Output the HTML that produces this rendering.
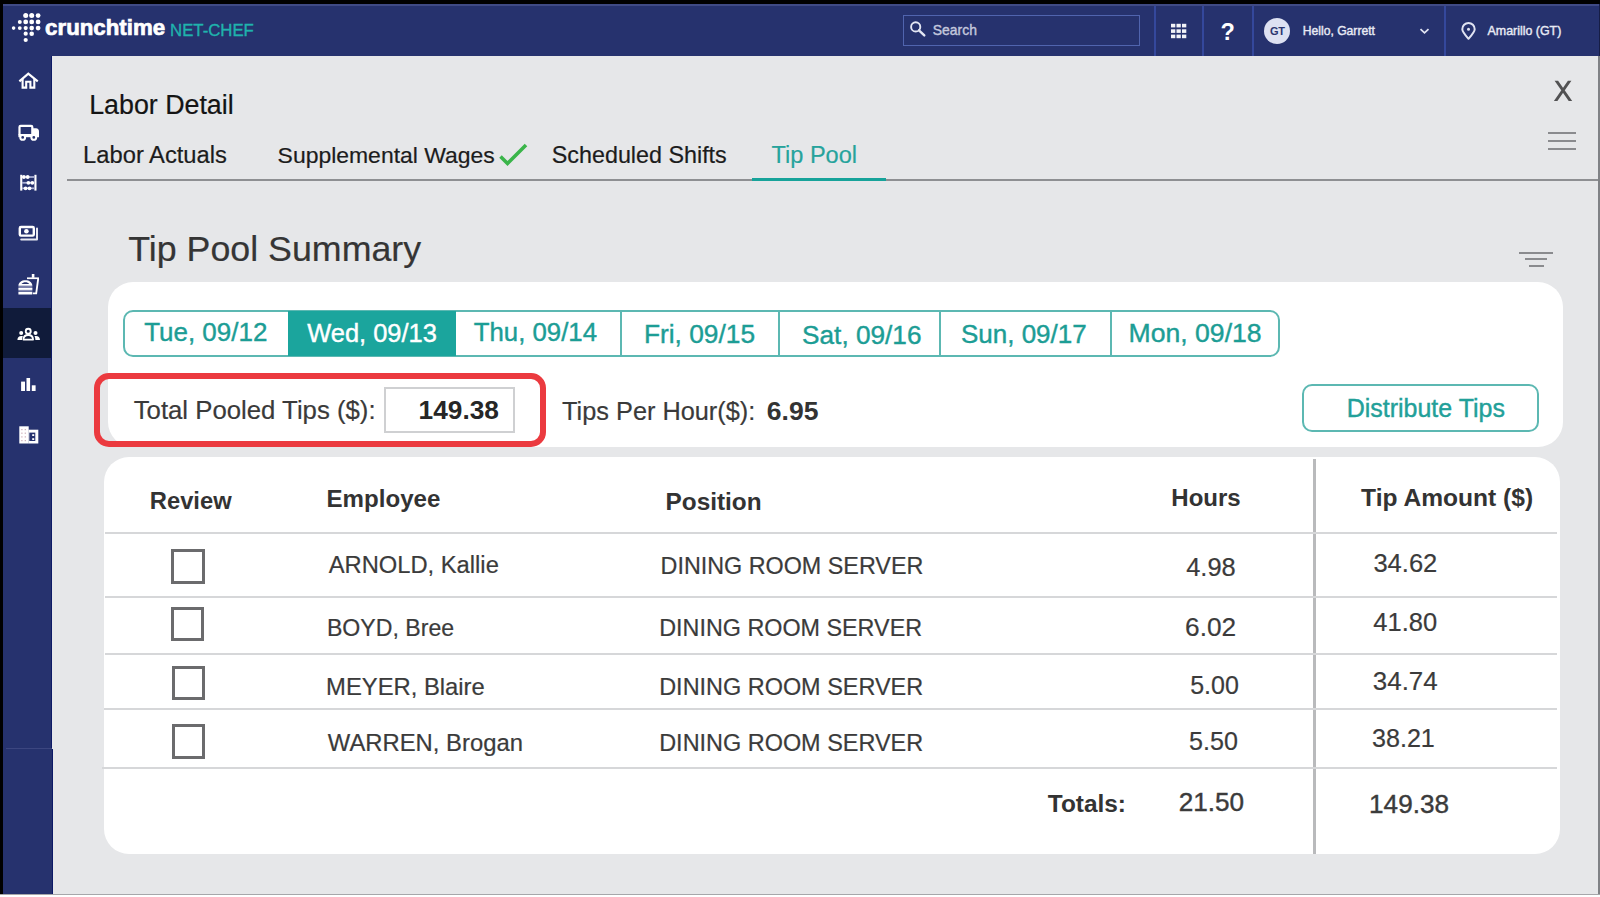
<!DOCTYPE html>
<html><head><meta charset="utf-8">
<style>
html,body{margin:0;padding:0;}
body{width:1600px;height:897px;position:relative;overflow:hidden;background:#ffffff;font-family:"Liberation Sans",sans-serif;}
.a{position:absolute;box-sizing:border-box;}
.t{position:absolute;white-space:nowrap;line-height:1;font-family:"Liberation Sans",sans-serif;}
</style></head><body>
<!-- frame -->
<div class="a" style="left:0;top:0;width:1600px;height:4px;background:#000"></div>
<div class="a" style="left:0;top:0;width:3px;height:894px;background:#000"></div>
<!-- header -->
<div class="a" style="left:3px;top:4px;width:1597px;height:52px;background:#26326e"></div>
<div class="a" style="left:3px;top:4px;width:1597px;height:2px;background:#3f4a85"></div>
<div class="a" style="left:1599px;top:4px;width:1px;height:52px;background:#161d45"></div>
<!-- sidebar -->
<div class="a" style="left:3px;top:56px;width:50px;height:838px;background:#26326e"></div>
<div class="a" style="left:51px;top:56px;width:1px;height:693px;background:#0d1a66"></div>
<div class="a" style="left:52px;top:749px;width:1px;height:145px;background:#0d1a66"></div>
<div class="a" style="left:3px;top:308px;width:48px;height:50px;background:#101b3a"></div>
<div class="a" style="left:6px;top:748px;width:46px;height:1px;background:#3c4680"></div>
<!-- content -->
<div class="a" style="left:52px;top:56px;width:1546px;height:693px;background:#e6e7e9"></div>
<div class="a" style="left:53px;top:749px;width:1545px;height:145px;background:#e6e7e9"></div>
<div class="a" style="left:1598px;top:56px;width:2px;height:838px;background:#808286"></div>
<div class="a" style="left:0;top:894px;width:1600px;height:1px;background:#a6a7aa"></div>

<!-- search box -->
<div class="a" style="left:903px;top:15px;width:237px;height:31px;border:1px solid #5064ae"></div>
<svg class="a" style="left:908px;top:21px" width="18" height="17" viewBox="0 0 18 17">
  <circle cx="7.7" cy="5.9" r="4.6" fill="none" stroke="#e3e6f3" stroke-width="1.9"/>
  <line x1="11" y1="9.3" x2="16.3" y2="14.4" stroke="#e3e6f3" stroke-width="2.4" stroke-linecap="round"/>
</svg>
<!-- separators -->
<div class="a" style="left:1154px;top:6px;width:2px;height:50px;background:#34489c"></div>
<div class="a" style="left:1202px;top:6px;width:2px;height:50px;background:#34489c"></div>
<div class="a" style="left:1252px;top:6px;width:2px;height:50px;background:#34489c"></div>
<div class="a" style="left:1444px;top:6px;width:2px;height:50px;background:#34489c"></div>
<!-- grid icon -->
<svg class="a" style="left:1171px;top:23px" width="16" height="16" viewBox="0 0 16 16" fill="#f2f3f8">
  <rect x="0" y="0.8" width="4.3" height="3.6"/><rect x="5.5" y="0.8" width="4.3" height="3.6"/><rect x="11" y="0.8" width="4.3" height="3.6"/>
  <rect x="0" y="6.3" width="4.3" height="3.6"/><rect x="5.5" y="6.3" width="4.3" height="3.6"/><rect x="11" y="6.3" width="4.3" height="3.6"/>
  <rect x="0" y="11.6" width="4.3" height="3.6"/><rect x="5.5" y="11.6" width="4.3" height="3.6"/><rect x="11" y="11.6" width="4.3" height="3.6"/>
</svg>
<!-- help -->
<div class="t" style="left:1220.5px;top:20.5px;font-size:23.5px;font-weight:700;color:#fff">?</div>
<!-- avatar -->
<div class="a" style="left:1264px;top:18px;width:26px;height:26px;border-radius:50%;background:#dde1f2"></div>
<div class="t" style="left:1270px;top:25.5px;font-size:11px;font-weight:700;color:#2c3670;letter-spacing:-0.3px">GT</div>
<!-- chevron -->
<svg class="a" style="left:1419px;top:27px" width="11" height="8" viewBox="0 0 11 8">
  <polyline points="1.5,2.2 5.5,5.8 9.5,2.2" fill="none" stroke="#e0e3f2" stroke-width="1.8"/>
</svg>
<!-- pin -->
<svg class="a" style="left:1460px;top:22px" width="17" height="19" viewBox="0 0 17 19">
  <path d="M8.5 16.8 C4.6 12.4 2.3 9.6 2.3 7.2 A6.2 6.2 0 0 1 14.7 7.2 C14.7 9.6 12.4 12.4 8.5 16.8 Z" fill="none" stroke="#e0e3f2" stroke-width="2" stroke-linejoin="round"/>
  <circle cx="8.5" cy="7.2" r="1.5" fill="#e0e3f2"/>
</svg>
<!-- logo dots -->
<svg class="a" style="left:10px;top:10px" width="34" height="34" viewBox="10 10 34 34" fill="#fff">
  <circle cx="25.7" cy="15.6" r="2.5"/><circle cx="31.7" cy="15.6" r="2.5"/><circle cx="38.1" cy="15.6" r="2.4"/>
  <circle cx="19.8" cy="21.9" r="2"/><circle cx="25.7" cy="21.9" r="2.4"/><circle cx="31.7" cy="21.9" r="2.4"/><circle cx="38.1" cy="21.9" r="2.4"/>
  <circle cx="13.6" cy="28.1" r="1.8"/><circle cx="19.8" cy="28.1" r="1.9"/><circle cx="25.7" cy="28.1" r="2.1"/><circle cx="31.7" cy="28.1" r="2.3"/><circle cx="38.1" cy="28.1" r="2.4"/>
  <circle cx="25.7" cy="33.7" r="2.1"/><circle cx="31.7" cy="33.7" r="2.3"/>
  <circle cx="25.7" cy="40" r="2.1"/>
</svg>

<!-- sidebar icons -->
<svg class="a" style="left:0;top:56px" width="53" height="400" viewBox="0 56 53 400">
<!-- home -->
<g fill="none" stroke="#fff">
  <path d="M20.2 80.6 L28.3 73.6 L36.9 80.6" stroke-width="2.2" stroke-linejoin="miter" stroke-linecap="square"/>
  <path d="M22.6 79 V87.6 H26.2 V81.8 H30.4 V87.6 H34.3 V79" stroke-width="2.1"/>
</g>
<!-- truck -->
<g>
  <rect x="19.5" y="125.8" width="12.8" height="9.5" rx="1.2" fill="none" stroke="#fff" stroke-width="2.2"/>
  <path d="M32 128.2 H36 Q39 128.6 39 131.6 V137.2 H32 Z" fill="#fff"/>
  <rect x="18.4" y="134" width="14" height="3.2" fill="#fff"/>
  <circle cx="22.7" cy="137.4" r="2.4" fill="#26326e" stroke="#fff" stroke-width="2"/>
  <circle cx="33.8" cy="137.4" r="2.4" fill="#26326e" stroke="#fff" stroke-width="2"/>
</g>
<!-- abacus -->
<g fill="#fff">
  <rect x="20.2" y="174.8" width="2.1" height="15.8"/><rect x="34.4" y="174.8" width="2.1" height="15.8"/>
  <rect x="22" y="176.1" width="12.5" height="1.8" fill="#a9aed3"/>
  <rect x="22" y="181.9" width="12.5" height="1.8" fill="#a9aed3"/>
  <rect x="22" y="187.4" width="12.5" height="1.8" fill="#a9aed3"/>
  <circle cx="23.9" cy="177" r="1.9"/><circle cx="27.7" cy="177" r="1.9"/>
  <circle cx="28.4" cy="182.8" r="1.9"/><circle cx="32.3" cy="182.8" r="1.9"/>
  <circle cx="25.6" cy="188.3" r="1.9"/><circle cx="29.5" cy="188.3" r="1.9"/>
</g>
<!-- money -->
<g>
  <rect x="19.8" y="227" width="14" height="8.6" rx="1.2" fill="none" stroke="#fff" stroke-width="2.4"/>
  <circle cx="26.4" cy="231.3" r="2.3" fill="#fff"/>
  <path d="M37 228.4 V239.6 H21.2" fill="none" stroke="#e8e9f2" stroke-width="2" stroke-linecap="round" stroke-linejoin="round"/>
</g>
<!-- burger & drink -->
<g fill="#fff">
  <path d="M18.4 285.8 C18.6 282.2 21.6 280.2 25.4 280.2 C29.2 280.2 32.2 282.2 32.4 285.8 Z M21.5 284 C22.5 282.7 23.8 282.2 25.4 282.2 C27 282.2 28.3 282.7 29.3 284 Z" fill-rule="evenodd"/>
  <rect x="18.4" y="286.2" width="14" height="1.6" fill="#8f94bb"/>
  <rect x="18.4" y="288" width="14" height="1.9"/>
  <rect x="18.4" y="290.1" width="14" height="1.5" fill="#8f94bb"/>
  <rect x="18.4" y="292" width="14" height="2.4" rx="0.5"/>
  <rect x="27" y="277.4" width="12" height="1.7"/>
  <rect x="31.8" y="274" width="2.6" height="3.8"/>
  <path d="M37.2 279 H39.1 L37 294.3 H33 V292.6 H35.4 Z"/>
</g>
<!-- people -->
<g>
  <circle cx="28.25" cy="331.3" r="2.5" fill="none" stroke="#fff" stroke-width="1.9"/>
  <path d="M23.4 339.6 C23.6 336.6 25.6 335 28.25 335 C30.9 335 32.9 336.6 33.1 339.6 Z" fill="none" stroke="#fff" stroke-width="1.8" stroke-linejoin="round"/>
  <circle cx="21.2" cy="333" r="2" fill="#fff"/><circle cx="35.5" cy="333" r="2" fill="#fff"/>
  <path d="M17.4 340 C17.5 337.4 19 335.9 21.3 335.9 C21.9 335.9 22.4 336 22.9 336.2 C22.3 337.3 22 338.6 22 340 Z" fill="#fff"/>
  <path d="M40 340 C39.9 337.4 38.4 335.9 36.1 335.9 C35.5 335.9 35 336 34.5 336.2 C35.1 337.3 35.4 338.6 35.4 340 Z" fill="#fff"/>
</g>
<!-- chart -->
<g fill="#fff">
  <rect x="21.1" y="381.6" width="3.9" height="9.4"/><rect x="26.5" y="378" width="3.6" height="13"/><rect x="31.8" y="385.3" width="3.8" height="5.7"/>
</g>
<!-- building -->
<g>
  <rect x="19.3" y="426.3" width="9.4" height="17.2" fill="#fff"/>
  <rect x="28.6" y="429.7" width="9.7" height="13.8" fill="#fff"/>
  <rect x="29.3" y="432.6" width="6" height="8.4" fill="#26326e"/>
  <rect x="32.2" y="434.2" width="2" height="1.8" fill="#fff"/><rect x="32.2" y="438.2" width="2" height="1.8" fill="#fff"/>
  <g fill="#c9a9b5">
    <rect x="21.3" y="429" width="1.2" height="1.2"/><rect x="24.7" y="429" width="1.2" height="1.2"/>
    <rect x="21.3" y="432.6" width="1.2" height="1.2"/><rect x="24.7" y="432.6" width="1.2" height="1.2"/>
    <rect x="21.3" y="436.3" width="1.2" height="1.2"/><rect x="24.7" y="436.3" width="1.2" height="1.2"/>
    <rect x="21.3" y="440" width="1.2" height="1.2"/><rect x="24.7" y="440" width="1.2" height="1.2"/>
  </g>
</g>
</svg>

<!-- content top -->
<svg class="a" style="left:1550px;top:78px" width="26" height="27" viewBox="1550 78 26 27">
  <path d="M1554.6 80.8 H1558.1 L1572.2 100.9 H1568.7 Z M1567.9 80.8 H1571.4 L1557.4 100.9 H1553.9 Z" fill="#525253"/>
</svg>
<div class="a" style="left:1548px;top:132px;width:28px;height:2px;background:#8a8b8e"></div>
<div class="a" style="left:1548px;top:140px;width:28px;height:2px;background:#8a8b8e"></div>
<div class="a" style="left:1548px;top:148px;width:28px;height:2px;background:#8a8b8e"></div>
<!-- tab line -->
<div class="a" style="left:67px;top:179px;width:1531px;height:2px;background:#8e8f92"></div>
<div class="a" style="left:752px;top:178px;width:134px;height:3px;background:#17a39a"></div>
<!-- check -->
<svg class="a" style="left:498px;top:142px" width="31" height="25" viewBox="0 0 31 25">
  <polyline points="2.5,14.5 9.5,21.5 28,3" fill="none" stroke="#3ab54a" stroke-width="3.6"/>
</svg>
<!-- filter icon -->
<div class="a" style="left:1519px;top:252px;width:34px;height:2px;background:#8a8b8e"></div>
<div class="a" style="left:1525px;top:258px;width:22px;height:2px;background:#8a8b8e"></div>
<div class="a" style="left:1529px;top:265px;width:15px;height:2px;background:#8a8b8e"></div>

<!-- card 1 -->
<div class="a" style="left:108px;top:282px;width:1455px;height:165px;background:#fff;border-radius:25px"></div>
<!-- segmented -->
<div class="a" style="left:123px;top:310px;width:1157px;height:47px;border:2px solid #5cb8b2;border-radius:10px"></div>
<div class="a" style="left:288px;top:311px;width:168px;height:45px;background:#1ba59d"></div>
<div class="a" style="left:620px;top:311px;width:2px;height:45px;background:#5cb8b2"></div>
<div class="a" style="left:778px;top:311px;width:2px;height:45px;background:#5cb8b2"></div>
<div class="a" style="left:939px;top:311px;width:2px;height:45px;background:#5cb8b2"></div>
<div class="a" style="left:1110px;top:311px;width:2px;height:45px;background:#5cb8b2"></div>
<!-- red box -->
<div class="a" style="left:94px;top:373px;width:452px;height:74px;border:6px solid #eb3a3f;border-radius:15px"></div>
<!-- input -->
<div class="a" style="left:384px;top:387px;width:131px;height:46px;border:2px solid #cfd0d2"></div>
<!-- distribute -->
<div class="a" style="left:1302px;top:384px;width:237px;height:48px;border:2px solid #5cb8b2;border-radius:10px"></div>

<!-- card 2 -->
<div class="a" style="left:104px;top:457px;width:1456px;height:397px;background:#fff;border-radius:25px"></div>
<div class="a" style="left:1313px;top:459px;width:3px;height:395px;background:#b9babc"></div>
<div class="a" style="left:105px;top:532px;width:1452px;height:2px;background:#d6d7d9"></div>
<div class="a" style="left:105px;top:596px;width:1452px;height:2px;background:#d6d7d9"></div>
<div class="a" style="left:105px;top:653px;width:1452px;height:2px;background:#d6d7d9"></div>
<div class="a" style="left:104px;top:708px;width:1453px;height:2px;background:#d6d7d9"></div>
<div class="a" style="left:102px;top:767px;width:1455px;height:2px;background:#d6d7d9"></div>
<!-- checkboxes -->
<div class="a" style="left:171px;top:549px;width:34px;height:35px;border:3.5px solid #6b6b6d"></div>
<div class="a" style="left:171px;top:607px;width:33px;height:34px;border:3.5px solid #6b6b6d"></div>
<div class="a" style="left:172px;top:666px;width:33px;height:34px;border:3.5px solid #6b6b6d"></div>
<div class="a" style="left:172px;top:724px;width:33px;height:35px;border:3.5px solid #6b6b6d"></div>

<div class="t" style="left:45.1px;top:17.3px;font-size:22.27px;font-weight:700;color:#ffffff;-webkit-text-stroke:0.7px #ffffff;">crunchtime</div>
<div class="t" style="left:170.1px;top:23.1px;font-size:16.76px;font-weight:400;color:#1fb3ad;-webkit-text-stroke:0.35px #1fb3ad;">NET-CHEF</div>
<div class="t" style="left:932.8px;top:23.6px;font-size:13.93px;font-weight:400;color:#c3c7dc;-webkit-text-stroke:0.4px #c3c7dc;">Search</div>
<div class="t" style="left:1302.7px;top:25.3px;font-size:12.17px;font-weight:400;color:#e8eaf4;-webkit-text-stroke:0.4px #e8eaf4;">Hello, Garrett</div>
<div class="t" style="left:1487.5px;top:25.2px;font-size:12.43px;font-weight:400;color:#e8eaf4;-webkit-text-stroke:0.4px #e8eaf4;">Amarillo (GT)</div>
<div class="t" style="left:89.2px;top:91.8px;font-size:26.8px;font-weight:400;color:#141414;-webkit-text-stroke:0.2px #141414;">Labor Detail</div>
<div class="t" style="left:83.1px;top:143.6px;font-size:23.74px;font-weight:400;color:#1c1c1c;-webkit-text-stroke:0.2px #1c1c1c;">Labor Actuals</div>
<div class="t" style="left:277.6px;top:144.3px;font-size:22.95px;font-weight:400;color:#1c1c1c;-webkit-text-stroke:0.2px #1c1c1c;">Supplemental Wages</div>
<div class="t" style="left:551.8px;top:144.0px;font-size:23.32px;font-weight:400;color:#1c1c1c;-webkit-text-stroke:0.2px #1c1c1c;">Scheduled Shifts</div>
<div class="t" style="left:771.5px;top:143.8px;font-size:23.55px;font-weight:400;color:#26a39c;-webkit-text-stroke:0.2px #26a39c;">Tip Pool</div>
<div class="t" style="left:128.3px;top:232.1px;font-size:35.78px;font-weight:400;color:#353535;-webkit-text-stroke:0.2px #353535;">Tip Pool Summary</div>
<div class="t" style="left:144.2px;top:320.0px;font-size:25.96px;font-weight:400;color:#1c9d95;-webkit-text-stroke:0.4px #1c9d95;">Tue, 09/12</div>
<div class="t" style="left:307.2px;top:320.7px;font-size:25.44px;font-weight:400;color:#ffffff;-webkit-text-stroke:0.4px #ffffff;">Wed, 09/13</div>
<div class="t" style="left:473.8px;top:320.4px;font-size:25.77px;font-weight:400;color:#1c9d95;-webkit-text-stroke:0.4px #1c9d95;">Thu, 09/14</div>
<div class="t" style="left:643.9px;top:320.9px;font-size:26.34px;font-weight:400;color:#1c9d95;-webkit-text-stroke:0.4px #1c9d95;">Fri, 09/15</div>
<div class="t" style="left:802.1px;top:322.0px;font-size:26.19px;font-weight:400;color:#1c9d95;-webkit-text-stroke:0.4px #1c9d95;">Sat, 09/16</div>
<div class="t" style="left:960.9px;top:321.2px;font-size:26.03px;font-weight:400;color:#1c9d95;-webkit-text-stroke:0.4px #1c9d95;">Sun, 09/17</div>
<div class="t" style="left:1128.5px;top:319.7px;font-size:26.62px;font-weight:400;color:#1c9d95;-webkit-text-stroke:0.4px #1c9d95;">Mon, 09/18</div>
<div class="t" style="left:133.7px;top:397.6px;font-size:25.75px;font-weight:400;color:#3a3a3a;-webkit-text-stroke:0.2px #3a3a3a;">Total Pooled Tips ($):</div>
<div class="t" style="left:418.6px;top:397.3px;font-size:26.26px;font-weight:700;color:#262626;">149.38</div>
<div class="t" style="left:562.1px;top:399.3px;font-size:25.32px;font-weight:400;color:#3a3a3a;-webkit-text-stroke:0.2px #3a3a3a;">Tips Per Hour($):</div>
<div class="t" style="left:766.8px;top:398.3px;font-size:26.54px;font-weight:700;color:#333333;">6.95</div>
<div class="t" style="left:1346.7px;top:395.6px;font-size:24.97px;font-weight:400;color:#22a099;-webkit-text-stroke:0.4px #22a099;">Distribute Tips</div>
<div class="t" style="left:149.8px;top:489.1px;font-size:23.76px;font-weight:700;color:#333333;">Review</div>
<div class="t" style="left:326.5px;top:487.1px;font-size:24.11px;font-weight:700;color:#333333;">Employee</div>
<div class="t" style="left:665.5px;top:490.1px;font-size:24.36px;font-weight:700;color:#333333;">Position</div>
<div class="t" style="left:1171.3px;top:485.8px;font-size:24.03px;font-weight:700;color:#333333;">Hours</div>
<div class="t" style="left:1361.1px;top:486.1px;font-size:24.58px;font-weight:700;color:#333333;">Tip Amount ($)</div>
<div class="t" style="left:328.7px;top:554.0px;font-size:23.74px;font-weight:400;color:#3b3b3b;-webkit-text-stroke:0.2px #3b3b3b;">ARNOLD, Kallie</div>
<div class="t" style="left:326.9px;top:617.1px;font-size:23.14px;font-weight:400;color:#3b3b3b;-webkit-text-stroke:0.2px #3b3b3b;">BOYD, Bree</div>
<div class="t" style="left:326.1px;top:675.1px;font-size:23.81px;font-weight:400;color:#3b3b3b;-webkit-text-stroke:0.2px #3b3b3b;">MEYER, Blaire</div>
<div class="t" style="left:327.8px;top:730.6px;font-size:23.83px;font-weight:400;color:#3b3b3b;-webkit-text-stroke:0.2px #3b3b3b;">WARREN, Brogan</div>
<div class="t" style="left:660.6px;top:555.0px;font-size:23.33px;font-weight:400;color:#3b3b3b;-webkit-text-stroke:0.2px #3b3b3b;">DINING ROOM SERVER</div>
<div class="t" style="left:659.2px;top:617.1px;font-size:23.35px;font-weight:400;color:#3b3b3b;-webkit-text-stroke:0.2px #3b3b3b;">DINING ROOM SERVER</div>
<div class="t" style="left:659.2px;top:676.2px;font-size:23.44px;font-weight:400;color:#3b3b3b;-webkit-text-stroke:0.2px #3b3b3b;">DINING ROOM SERVER</div>
<div class="t" style="left:659.2px;top:731.8px;font-size:23.44px;font-weight:400;color:#3b3b3b;-webkit-text-stroke:0.2px #3b3b3b;">DINING ROOM SERVER</div>
<div class="t" style="left:1186.2px;top:554.9px;font-size:25.43px;font-weight:400;color:#3b3b3b;-webkit-text-stroke:0.2px #3b3b3b;">4.98</div>
<div class="t" style="left:1185.1px;top:614.1px;font-size:26.27px;font-weight:400;color:#3b3b3b;-webkit-text-stroke:0.2px #3b3b3b;">6.02</div>
<div class="t" style="left:1190.2px;top:673.3px;font-size:25.03px;font-weight:400;color:#3b3b3b;-webkit-text-stroke:0.2px #3b3b3b;">5.00</div>
<div class="t" style="left:1189.0px;top:729.4px;font-size:25.13px;font-weight:400;color:#3b3b3b;-webkit-text-stroke:0.2px #3b3b3b;">5.50</div>
<div class="t" style="left:1373.4px;top:550.9px;font-size:25.56px;font-weight:400;color:#3b3b3b;-webkit-text-stroke:0.2px #3b3b3b;">34.62</div>
<div class="t" style="left:1373.3px;top:609.9px;font-size:25.49px;font-weight:400;color:#3b3b3b;-webkit-text-stroke:0.2px #3b3b3b;">41.80</div>
<div class="t" style="left:1372.8px;top:668.8px;font-size:25.93px;font-weight:400;color:#3b3b3b;-webkit-text-stroke:0.2px #3b3b3b;">34.74</div>
<div class="t" style="left:1372.0px;top:726.4px;font-size:25.12px;font-weight:400;color:#3b3b3b;-webkit-text-stroke:0.2px #3b3b3b;">38.21</div>
<div class="t" style="left:1047.8px;top:791.8px;font-size:24.42px;font-weight:700;color:#333333;">Totals:</div>
<div class="t" style="left:1178.7px;top:789.2px;font-size:26.14px;font-weight:400;color:#3b3b3b;-webkit-text-stroke:0.4px #3b3b3b;">21.50</div>
<div class="t" style="left:1369.1px;top:791.1px;font-size:26.12px;font-weight:400;color:#3b3b3b;-webkit-text-stroke:0.4px #3b3b3b;">149.38</div>
</body></html>
